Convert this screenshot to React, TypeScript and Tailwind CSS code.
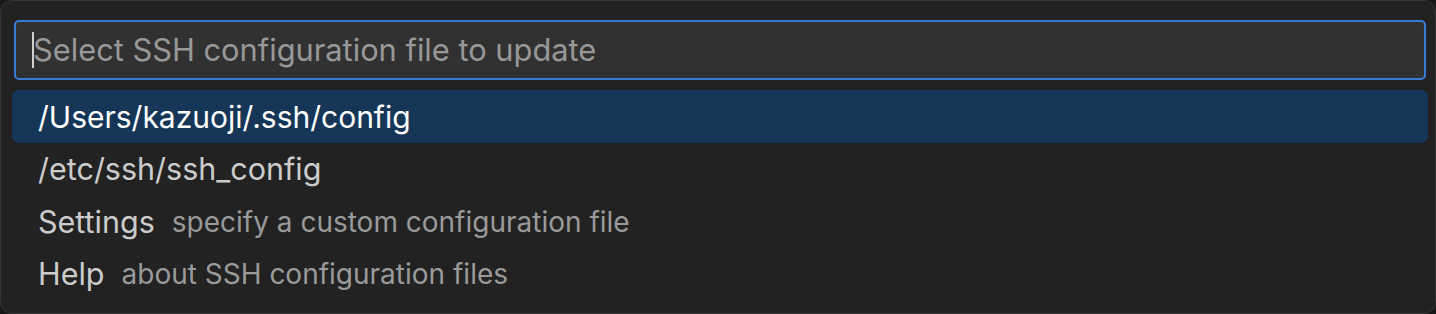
import React from "react";

const font = { fontFamily: "Inter, 'Noto Sans', sans-serif" };

type Item = { label: string; desc?: string; active?: boolean };

const items: Item[] = [
  { label: "/Users/kazuoji/.ssh/config", active: true },
  { label: "/etc/ssh/ssh_config" },
  { label: "Settings", desc: "specify a custom configuration file" },
  { label: "Help", desc: "about SSH configuration files" },
];

export default function App() {
  return (
    <div className="w-[1436px] h-[314px] bg-[#181818]" style={font}>
      <div className="h-full rounded-[12px] border border-[#363636] bg-[#222222] pl-[11px] pr-[7px] pt-[19px]">
        <div className="mx-[2px] h-[60px] rounded-[5px] border-2 border-[#3a7ad6] bg-[#313131] flex items-center pl-[16px]">
          <div className="w-[2px] h-[36px] bg-[#d0d0d0] -mr-[1px] shrink-0" />
          <span className="text-[30.8px] text-[#989898] leading-none">Select SSH configuration file to update</span>
        </div>
        <div className="mt-[10px] flex flex-col">
          {items.map((it) => (
            <div
              key={it.label}
              className={
                it.active
                  ? "h-[53px] rounded-[7px] bg-[#163657] flex items-center pl-[26px]"
                  : "h-[52.5px] rounded-[7px] flex items-center pl-[26px]"
              }
            >
              <span className={it.active ? "text-[30px] text-white leading-none" : "text-[30.5px] text-[#cccccc] leading-none"}>
                {it.label}
              </span>
              {it.desc && (
                <span className="ml-[17px] text-[28px] text-[#9a9a9a] leading-none">{it.desc}</span>
              )}
            </div>
          ))}
        </div>
      </div>
    </div>
  );
}
